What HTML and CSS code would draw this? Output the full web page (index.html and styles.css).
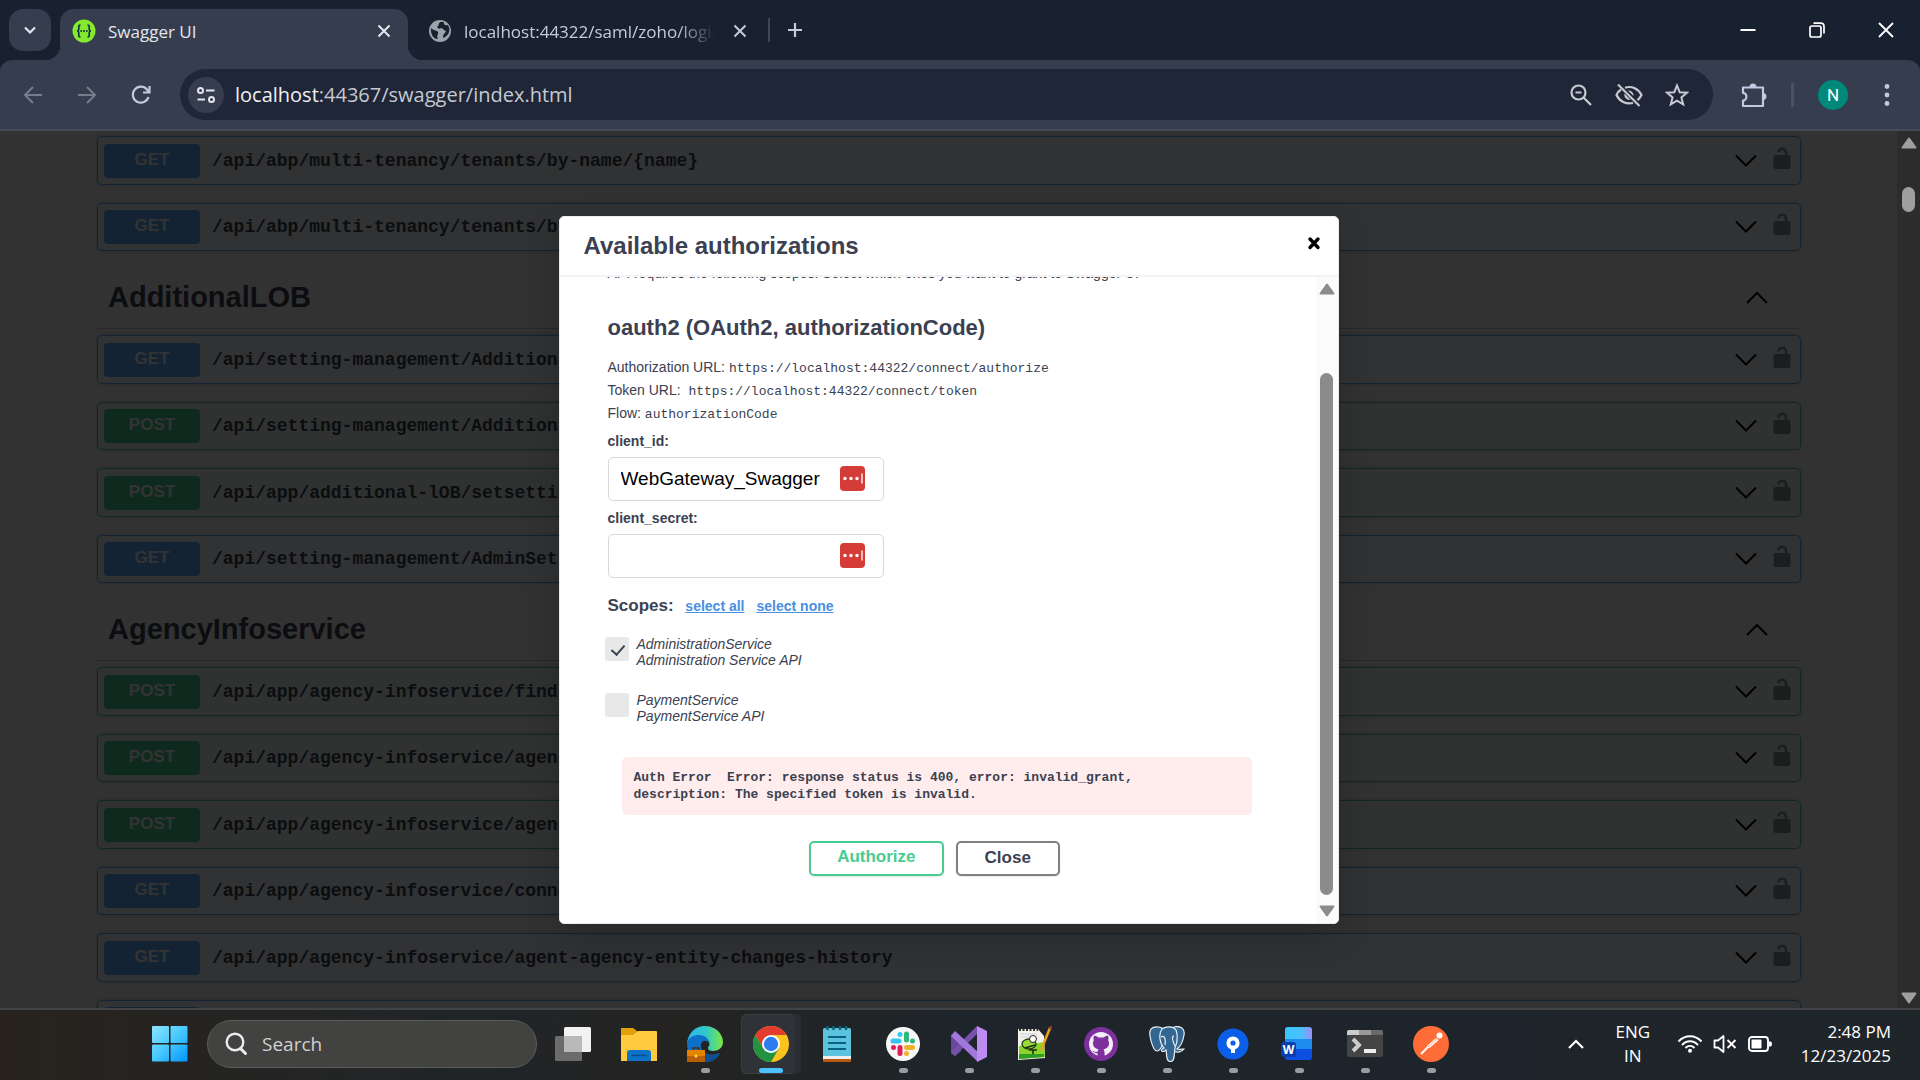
FILE: index.html
```
<!DOCTYPE html>
<html lang="en">
<head>
  <meta charset="UTF-8" />
  <meta name="viewport" content="width=device-width, initial-scale=1.0"/>
  <title>Swagger UI</title>

  <link rel="stylesheet" href="styles.css">
</head>
<body>
  <!-- shared icons -->
  <svg width="0" height="0" class="sprite">
    <symbol id="down" viewBox="0 0 22 14"><path d="M1 1.500 L11 11.500 L21 1.500" fill="none" stroke="currentColor" stroke-width="2"/></symbol>
    <symbol id="up" viewBox="0 0 22 14"><path d="M1 12 L11 2 L21 12" fill="none" stroke="currentColor" stroke-width="2"/></symbol>
    <symbol id="lock" viewBox="0 0 18 22"><rect x="0.500" y="8" width="17" height="14" rx="2"/><path d="M5.500 5.500 C5.500 0.500 13 0.500 13 5.500 V9" fill="none" stroke="#000" stroke-width="2.600"/></symbol>
    <symbol id="cross" viewBox="0 0 14 14"><path d="M1.500 1.500 L12.500 12.500 M12.500 1.500 L1.500 12.500" fill="none" stroke="currentColor" stroke-width="2"/></symbol>
    <symbol id="tri" viewBox="0 0 16 12"><path d="M8 1.500 L14.500 10.500 H1.500 Z" fill="currentColor" stroke="currentColor" stroke-width="2" stroke-linejoin="round"/></symbol>
    <symbol id="fill-key" viewBox="0 0 25 25"><rect width="25" height="25" rx="4" fill="#d63c37"/><circle cx="5" cy="12.500" r="1.700" fill="#fff"/><circle cx="11" cy="12.500" r="1.700" fill="#fff"/><circle cx="17" cy="12.500" r="1.700" fill="#fff"/><path d="M22 7.500 V17.500" stroke="#fff" stroke-width="1.300"/></symbol>
  </svg>

  <header class="tabs">
    <button class="tab-search" aria-label="Search tabs"><svg width="14" height="9" viewBox="0 0 14 9"><path d="M2 1.500 L7 6.500 L12 1.500" fill="none" stroke="#e3e6ee" stroke-width="2.200"/></svg></button>
    <div class="tab active">
      <svg width="24" height="24" viewBox="0 0 24 24"><circle cx="12" cy="12" r="11.500" fill="#85ea2d"/><path d="M8.500 6 C6 6 7 8.500 6.800 10 C6.700 11.300 6 12 5 12 C6 12 6.700 12.700 6.800 14 C7 15.500 6 18 8.500 18 M15.500 6 C18 6 17 8.500 17.200 10 C17.300 11.300 18 12 19 12 C18 12 17.300 12.700 17.200 14 C17 15.500 18 18 15.500 18" fill="none" stroke="#173647" stroke-width="1.700"/><g fill="#173647"><circle cx="9.200" cy="12" r="1"/><circle cx="12" cy="12" r="1"/><circle cx="14.800" cy="12" r="1"/></g></svg>
      <span>Swagger UI</span>
      <button aria-label="Close tab"><svg width="14" height="14"><use href="#cross"/></svg></button>
    </div>
    <div class="tab second">
      <svg width="24" height="24" viewBox="0 0 24 24"><circle cx="12" cy="12" r="11" fill="#9da3ab"/><path d="M3 9 C6 12 9 11 10 13 C11 15 8 16 10 20 C5 20 2.500 15 3 9 Z M12 3 C10 5 11 7 9 8 C10 10 12 10 13 9 C15 9 16 12 18 12 C17 15 15 14 15 19 C21 17 23 11 20 6 C17 7 15 5 16 3 Z" fill="#182130"/></svg>
      <span class="fade">localhost:44322/saml/zoho/login</span>
      <button aria-label="Close tab"><svg width="14" height="14"><use href="#cross"/></svg></button>
    </div>
    <span class="tab-line"></span>
    <button class="new-tab" aria-label="New tab"><svg width="16" height="16" viewBox="0 0 16 16"><path d="M8 1 V15 M1 8 H15" stroke="currentColor" stroke-width="2.200"/></svg></button>
    <div class="window-buttons">
      <button aria-label="Minimize"><svg width="16" height="16" viewBox="0 0 16 16"><path d="M0.500 8 H15.500" stroke="#fff" stroke-width="2"/></svg></button>
      <button aria-label="Restore"><svg width="16" height="16" viewBox="0 0 16 16" fill="none" stroke="#fff" stroke-width="1.700"><rect x="1" y="4" width="11" height="11" rx="2"/><path d="M4.500 1.200 H11.500 Q15 1.200 15 4.500 V11.500"/></svg></button>
      <button aria-label="Close"><svg width="16" height="16" viewBox="0 0 16 16"><path d="M1 1 L15 15 M15 1 L1 15" stroke="#fff" stroke-width="1.800"/></svg></button>
    </div>
  </header>

  <nav class="toolbar">
    <button class="dim" aria-label="Back"><svg width="20" height="20" viewBox="0 0 20 20"><path d="M19 10 H2 M10 2 L2 10 L10 18" fill="none" stroke="currentColor" stroke-width="2"/></svg></button>
    <button class="dim" aria-label="Forward"><svg width="20" height="20" viewBox="0 0 20 20"><path d="M1 10 H18 M10 2 L18 10 L10 18" fill="none" stroke="currentColor" stroke-width="2"/></svg></button>
    <button aria-label="Reload"><svg width="20" height="20" viewBox="0 0 20 20"><path d="M17.500 12 A8 8 0 1 1 16 4.500 L17.500 6.500" fill="none" stroke="currentColor" stroke-width="2.200"/><path d="M12 7.500 H18.500 V1" fill="none" stroke="currentColor" stroke-width="2.200"/></svg></button>
    <div class="omnibox">
      <button class="site-info" aria-label="Site information"><svg width="20" height="20" viewBox="0 0 20 20" fill="none" stroke="#e3e6ee" stroke-width="2"><circle cx="4.500" cy="5.500" r="2.500"/><path d="M10 5.500 H18.500 M1.500 14.500 H9"/><circle cx="15.500" cy="14.500" r="2.500"/></svg></button>
      <a href="#" class="url"><b>localhost</b>:44367/swagger/index.html</a>
      <button aria-label="Zoom"><svg width="24" height="24" viewBox="0 0 24 24" fill="none" stroke="currentColor" stroke-width="2.200"><circle cx="9.500" cy="9.500" r="7"/><path d="M14.500 14.500 L22 22 M6.500 9.500 H12.500"/></svg></button>
      <button aria-label="Third-party cookies blocked"><svg width="28" height="24" viewBox="0 0 28 24" fill="none" stroke="currentColor" stroke-width="2.200"><path d="M10 4.700 C17 2.500 23.500 6 26.500 12 C25.500 14 24 16 22.500 17.200 M18 20 C11 21.500 4.500 18.500 1.500 12 C2.500 9.500 4 7.800 6 6.500"/><path d="M3 1.500 L24.500 23"/><path d="M9.500 10.500 A5 5 0 0 0 15.500 16.700 Z M13 7.500 A5 5 0 0 1 18.500 13 Z" fill="currentColor" stroke="none"/></svg></button>
      <button aria-label="Bookmark"><svg width="24" height="24" viewBox="0 0 24 24"><path d="M12 2.500 L14.700 9.200 L22 9.700 L16.400 14.400 L18.200 21.400 L12 17.600 L5.800 21.400 L7.600 14.400 L2 9.700 L9.300 9.200 Z" fill="none" stroke="currentColor" stroke-width="2"/></svg></button>
    </div>
    <button class="ext" aria-label="Extensions"><svg width="26" height="26" viewBox="0 0 26 26"><path d="M2 5.500 H22 V24 H2 V18.500 C6.500 18.500 6.500 11 2 11 Z" fill="none" stroke="currentColor" stroke-width="2.200" stroke-linejoin="round"/><path d="M8.500 5 A3.300 3.300 0 0 1 15.500 5 Z M22 11 A3.300 3.300 0 0 1 22 18 Z" fill="currentColor"/></svg></button>
    <span class="tool-line"></span>
    <button class="avatar">N</button>
    <button class="menu" aria-label="Menu"><svg width="6" height="24" viewBox="0 0 6 24" fill="currentColor"><circle cx="3" cy="3.500" r="2.400"/><circle cx="3" cy="12" r="2.400"/><circle cx="3" cy="20.500" r="2.400"/></svg></button>
  </nav>

  <main>
    <div class="page">
      <section>
        <div class="opblock get"><button class="summary"><span class="method">GET</span><span class="path">/api/abp/multi-tenancy/tenants/by-name/{name}</span><svg width="22" height="14"><use href="#down"/></svg></button><button class="lock" aria-label="Unlocked"><svg width="18" height="22"><use href="#lock"/></svg></button></div>
        <div class="opblock get"><button class="summary"><span class="method">GET</span><span class="path">/api/abp/multi-tenancy/tenants/by-id/{id}</span><svg width="22" height="14"><use href="#down"/></svg></button><button class="lock" aria-label="Unlocked"><svg width="18" height="22"><use href="#lock"/></svg></button></div>
      </section>

      <h3 class="tag"><a href="#">AdditionalLOB</a><svg width="22" height="14"><use href="#up"/></svg></h3>
      <section>
        <div class="opblock get"><button class="summary"><span class="method">GET</span><span class="path">/api/setting-management/AdditionalLOB</span><svg width="22" height="14"><use href="#down"/></svg></button><button class="lock" aria-label="Unlocked"><svg width="18" height="22"><use href="#lock"/></svg></button></div>
        <div class="opblock post"><button class="summary"><span class="method">POST</span><span class="path">/api/setting-management/AdditionalLOB</span><svg width="22" height="14"><use href="#down"/></svg></button><button class="lock" aria-label="Unlocked"><svg width="18" height="22"><use href="#lock"/></svg></button></div>
        <div class="opblock post"><button class="summary"><span class="method">POST</span><span class="path">/api/app/additional-lOB/setsettings</span><svg width="22" height="14"><use href="#down"/></svg></button><button class="lock" aria-label="Unlocked"><svg width="18" height="22"><use href="#lock"/></svg></button></div>
        <div class="opblock get"><button class="summary"><span class="method">GET</span><span class="path">/api/setting-management/AdminSettings</span><svg width="22" height="14"><use href="#down"/></svg></button><button class="lock" aria-label="Unlocked"><svg width="18" height="22"><use href="#lock"/></svg></button></div>
      </section>

      <h3 class="tag"><a href="#">AgencyInfoservice</a><svg width="22" height="14"><use href="#up"/></svg></h3>
      <section>
        <div class="opblock post"><button class="summary"><span class="method">POST</span><span class="path">/api/app/agency-infoservice/find-agency</span><svg width="22" height="14"><use href="#down"/></svg></button><button class="lock" aria-label="Unlocked"><svg width="18" height="22"><use href="#lock"/></svg></button></div>
        <div class="opblock post"><button class="summary"><span class="method">POST</span><span class="path">/api/app/agency-infoservice/agency-info</span><svg width="22" height="14"><use href="#down"/></svg></button><button class="lock" aria-label="Unlocked"><svg width="18" height="22"><use href="#lock"/></svg></button></div>
        <div class="opblock post"><button class="summary"><span class="method">POST</span><span class="path">/api/app/agency-infoservice/agency-list</span><svg width="22" height="14"><use href="#down"/></svg></button><button class="lock" aria-label="Unlocked"><svg width="18" height="22"><use href="#lock"/></svg></button></div>
        <div class="opblock get"><button class="summary"><span class="method">GET</span><span class="path">/api/app/agency-infoservice/connected</span><svg width="22" height="14"><use href="#down"/></svg></button><button class="lock" aria-label="Unlocked"><svg width="18" height="22"><use href="#lock"/></svg></button></div>
        <div class="opblock get"><button class="summary"><span class="method">GET</span><span class="path">/api/app/agency-infoservice/agent-agency-entity-changes-history</span><svg width="22" height="14"><use href="#down"/></svg></button><button class="lock" aria-label="Unlocked"><svg width="18" height="22"><use href="#lock"/></svg></button></div>
        <div class="opblock get"><button class="summary"><span class="method"></span><span class="path"></span></button></div>
      </section>

      <div class="backdrop">
        <div class="modal">
          <div class="modal-header">
            <h3>Available authorizations</h3>
            <button aria-label="Close dialog"><svg width="14" height="14" viewBox="0 0 14 14"><path d="M3 3 L11 11.500 M11 3 L3 11.500" stroke="#000" stroke-width="3.400" stroke-linecap="round"/></svg></button>
          </div>
          <div class="modal-body">
            <form class="auth">
              <p class="intro">API requires the following scopes. Select which ones you want to grant to Swagger UI</p>
              <h4>oauth2 (OAuth2, authorizationCode)</h4>
              <p>Authorization URL: <code>https://localhost:44322/connect/authorize</code></p>
              <p>Token URL:&nbsp; <code>https://localhost:44322/connect/token</code></p>
              <p>Flow: <code>authorizationCode</code></p>
              <label class="field-label" for="client_id">client_id:</label>
              <div class="field">
                <input type="text" id="client_id" value="WebGateway_Swagger">
                <svg width="25" height="25"><use href="#fill-key"/></svg>
              </div>
              <label class="field-label" for="client_secret">client_secret:</label>
              <div class="field">
                <input type="password" id="client_secret">
                <svg width="25" height="25"><use href="#fill-key"/></svg>
              </div>
              <h2>Scopes: <a href="#">select all</a><a href="#">select none</a></h2>
              <div class="scope">
                <input type="checkbox" id="scope-admin" checked>
                <label for="scope-admin">AdministrationService<br>Administration Service API</label>
              </div>
              <div class="scope">
                <input type="checkbox" id="scope-payment">
                <label for="scope-payment">PaymentService<br>PaymentService API</label>
              </div>
              <div class="errors">Auth Error&nbsp; Error: response status is 400, error: invalid_grant, description: The specified token is invalid.</div>
              <div class="buttons">
                <button type="button" class="authorize">Authorize</button>
                <button type="button">Close</button>
              </div>
            </form>
            <div class="scrollbar">
              <svg width="16" height="12"><use href="#tri"/></svg>
              <span class="thumb"></span>
              <svg class="flip" width="16" height="12"><use href="#tri"/></svg>
            </div>
          </div>
        </div>
      </div>
    </div>
    <div class="scrollbar page-scroll">
      <svg width="16" height="12"><use href="#tri"/></svg>
      <span class="thumb"></span>
      <svg class="flip" width="16" height="12"><use href="#tri"/></svg>
    </div>
  </main>

  <footer class="taskbar">
    <button class="start" aria-label="Start"><svg width="36" height="36" viewBox="0 0 36 36"><defs><linearGradient id="win" x1="0" y1="0" x2="36" y2="36" gradientUnits="userSpaceOnUse"><stop offset="0" stop-color="#8fe3ff"/><stop offset="0.500" stop-color="#45c8ff"/><stop offset="1" stop-color="#0093ff"/></linearGradient></defs><g fill="url(#win)"><rect width="17" height="17" rx="1"/><rect x="18.500" width="17" height="17" rx="1"/><rect y="18.500" width="17" height="17" rx="1"/><rect x="18.500" y="18.500" width="17" height="17" rx="1"/></g></svg></button>
    <label class="search">
      <svg width="24" height="24" viewBox="0 0 24 24" fill="none" stroke="#e8edf0"><circle cx="11" cy="10" r="8.300" stroke-width="2.400"/><path d="M16.500 16.500 L21.500 21.500" stroke-width="3" stroke-linecap="round"/></svg>
      <input type="text" placeholder="Search" aria-label="Search">
    </label>
    <div class="apps">
      <button aria-label="Task view"><svg width="36" height="36" viewBox="0 0 36 36"><rect x="0" y="10" width="27" height="25" rx="1.500" fill="#6b6b6b"/><rect x="9" y="1" width="27" height="25" rx="1.500" fill="#f2f2f2"/><rect x="9" y="10" width="18" height="16" fill="#b9b9b9"/></svg></button>
      <button aria-label="File Explorer"><svg width="36" height="36" viewBox="0 0 36 36"><path d="M0 2 H12 L16 5 V12 H0 Z" fill="#e3a008"/><path d="M0 9 H12 L17 5 H35 Q36 5 36 6 V35 H0 Z" fill="#ffca3d"/><path d="M6 35 V27 Q6 24 9 24 H27 Q30 24 30 27 V35 Z" fill="#0b72c8"/><path d="M11 29.500 H25" stroke="#084d8a" stroke-width="1.600" stroke-linecap="round"/></svg></button>
      <button class="open" aria-label="Edge"><svg width="36" height="36" viewBox="0 0 36 36"><defs><linearGradient id="edge"><stop offset="0" stop-color="#2fb4f0"/><stop offset="0.550" stop-color="#32c9c3"/><stop offset="1" stop-color="#7ee83f"/></linearGradient></defs><path d="M0 18 C1 7 8 0 18 0 C29 0 36 8 36 16 C36 22 31 25 26 25 C21 25 20 22 22 20 C24 16 20 10 12 11 C6 11 2 14 0 18 Z" fill="url(#edge)"/><path d="M0 18 C1 11 7 9 12 9 C18 9 22 13 22 17 C18 12 13 16 14 21 C15 28 24 31 33 27 C30 33 25 36 18 36 C8 36 0 29 0 18 Z" fill="#0f6fc9"/><path d="M14 21 C15 28 24 31 33 27 C30 33 25 36 18 36 Z" fill="#104f96"/><rect y="24" width="18" height="12" fill="#e28400"/><rect y="30" width="18" height="6" fill="#b65f06"/><path d="M6 24 V22 H12 V24" fill="none" stroke="#4b3010" stroke-width="1.500"/><circle cx="9" cy="30" r="1.500" fill="#ffe14a"/></svg></button>
      <button class="open current" aria-label="Chrome"><svg width="36" height="36" viewBox="0 0 36 36"><circle cx="18" cy="18" r="18" fill="#fcc31e"/><path d="M2.400 9 A18 18 0 0 1 33.600 9 H18 L10.200 22.500 Z" fill="#e33b2e"/><path d="M2.400 9 A18 18 0 0 0 18 36 L25.800 22.500 H10.200 Z" fill="#229342"/><circle cx="18" cy="18" r="9" fill="#fff"/><circle cx="18" cy="18" r="7.200" fill="#2f7bf0"/></svg></button>
      <button aria-label="Notepad"><svg width="36" height="36" viewBox="0 0 36 36"><rect x="4" y="2" width="28" height="32" rx="1.500" fill="#5cc3de"/><rect x="4" y="30" width="28" height="4" fill="#eee"/><rect x="4" y="33" width="28" height="3" rx="1" fill="#b95a12"/><path d="M9 11 H27 M9 17 H27 M9 23 H27" stroke="#0b6280" stroke-width="2"/><path d="M8.500 0 V4 M14.500 0 V4 M21 0 V4 M27 0 V4" stroke="#0b6280" stroke-width="2.500"/></svg></button>
      <button class="open" aria-label="Slack"><svg width="36" height="36" viewBox="0 0 36 36"><circle cx="18" cy="18" r="17" fill="#f7f7f7"/><g stroke-width="5" stroke-linecap="round"><path d="M8 15 H14 M15 8.500 V8.600" stroke="#36c5f0"/><path d="M21.500 8 V14 M27.500 15 V14.900" stroke="#2eb67d"/><path d="M21.500 21.500 H27.500 M21.500 27.500 V27.600" stroke="#ecb22e"/><path d="M15 21.500 V27.500 M8.500 21.500 V21.600" stroke="#e01e5a"/></g></svg></button>
      <button class="open" aria-label="Visual Studio"><svg width="36" height="36" viewBox="0 0 36 36"><path d="M0 9 L4 6 L10 11 V25 L4 30 L0 27 Z" fill="#68459f"/><path d="M4 30 L26 8 V0 L0 26 V27 Z" fill="#7651ab"/><path d="M0 10 L4 5 L27 26 V36 Z" fill="#a077db"/><path d="M26 0 L36 5 V31 L26 36 Z" fill="#bd8bf2"/></svg></button>
      <button class="open" aria-label="Notepad++"><svg width="36" height="36" viewBox="0 0 36 36"><path d="M1 3 H21 L27 10 L28 32 L1 34 Z" fill="#f3f3ec"/><path d="M2 20 L27 16 L28 31 L2 33 Z" fill="#8bd42b"/><path d="M2 28 H27 V31 L2 33 Z" fill="#2f9d25"/><path d="M3 8 H20 M3 11 H14" stroke="#c9d0d6"/><path d="M2 4 H21" stroke="#333" stroke-width="2" stroke-dasharray="2 1.500"/><ellipse cx="12" cy="18" rx="7" ry="5" fill="#9ada3b" stroke="#263f12" stroke-width="1.300"/><circle cx="16" cy="13" r="3.500" fill="#fff" stroke="#222"/><path d="M8 22 L18 19 M12 24 H20 M16 24 V28" stroke="#1d3010" stroke-width="1.600"/><path d="M33 2 L24 24" stroke="#e8a020" stroke-width="2.600"/><path d="M34 0 L33 3" stroke="#a33" stroke-width="2.600"/></svg></button>
      <button class="open" aria-label="GitHub"><svg width="36" height="36" viewBox="0 0 36 36"><circle cx="18" cy="18" r="17" fill="#7d2f9e"/><circle cx="18" cy="18" r="12" fill="#f4edf7"/><path d="M11 9.500 Q14 10 15.500 11.500 H20.500 Q22 10 25 9.500 Q26 12 25.200 14 Q27 17 25.500 20 Q24 23 20.500 23.500 Q22 25 21.500 31 H14.500 V27 Q11 28 9 24 Q12 27 14.600 25.500 L15.500 23.500 Q12 23 10.500 20 Q9 17 10.800 14 Q10 12 11 9.500 Z" fill="#7d2f9e"/></svg></button>
      <button class="open" aria-label="pgAdmin"><svg width="36" height="36" viewBox="0 0 36 36" fill="#336791" stroke="#e8eef3" stroke-width="1.200"><path d="M10 1 C2 0 0 4 1 10 C2 17 5 25 8 25 C10 25 12 22 13 20 L13 2 Z"/><path d="M25 1 C33 -1 36 4 35 9 C34 15 31 21 28 23 C30 24 33 23 35 23 C33 26 28 27 24 25 L22 3 Z"/><path d="M13 3 C17 0 24 0 27 4 C29 10 28 17 26 22 C25 28 26 35 22 35.500 C17 36 18 30 17 24 C12 28 11 23 15 22 C11 18 9 8 13 3 Z"/><path d="M12 11 C15 9 17 12 16 19 M25 10 C22 10 24 16 26 20" fill="none"/></svg></button>
      <button class="open" aria-label="Sourcetree"><svg width="36" height="36" viewBox="0 0 36 36"><circle cx="18" cy="18" r="15.500" fill="#0a5ee8"/><circle cx="18" cy="17" r="4.600" fill="none" stroke="#fff" stroke-width="4"/><path d="M18 21 V27" stroke="#fff" stroke-width="4"/></svg></button>
      <button class="open" aria-label="Word"><svg width="36" height="36" viewBox="0 0 36 36"><defs><linearGradient id="word"><stop offset="0" stop-color="#36c8fb"/><stop offset="0.600" stop-color="#4cc0ff"/><stop offset="1" stop-color="#9f8cf5"/></linearGradient></defs><rect x="4" y="1" width="27" height="33" rx="3" fill="#0d4fe0"/><path d="M7 1 H28 Q31 1 31 4 V13 H4 V4 Q4 1 7 1 Z" fill="url(#word)"/><path d="M4 13 H31 V23 H4 Z" fill="#1d8bef"/><rect x="0" y="16" width="15" height="15" rx="3" fill="#0c3fae"/><text x="7.500" y="28" text-anchor="middle" class="word-text">W</text></svg></button>
      <button class="open" aria-label="Terminal"><svg width="36" height="36" viewBox="0 0 36 36"><rect y="4" width="36" height="27" rx="2" fill="#444"/><path d="M0 9 V6 Q0 4 2 4 H12 V9 Z" fill="#ccc"/><path d="M12 4 H24 V9 H12 Z" fill="#999"/><path d="M24 4 H34 Q36 4 36 6 V9 H24 Z" fill="#6a6a6a"/><path d="M6 13 L12 19 L6 25" fill="none" stroke="#ccc" stroke-width="4"/><rect x="17" y="23" width="12" height="4" fill="#eee"/></svg></button>
      <button class="open" aria-label="Postman"><svg width="36" height="36" viewBox="0 0 36 36"><circle cx="18" cy="18" r="18" fill="#ff6c37"/><circle cx="26.500" cy="9.500" r="3" fill="#fff"/><path d="M23 12 L14 20 L17 22 L26 14 Z" fill="#fff"/><path d="M16 20 L8 28" stroke="#fff" stroke-width="2"/><path d="M15 21 L25 12 M17 22 L26 14" stroke="#ff6c37" stroke-width="0.600"/></svg></button>
    </div>
    <div class="tray">
      <button aria-label="Show hidden icons"><svg width="18" height="12" viewBox="0 0 18 12"><path d="M2 10 L9 3 L16 10" fill="none" stroke="#fff" stroke-width="2.200"/></svg></button>
      <button class="lang">ENG<br>IN</button>
      <button class="status" aria-label="Network, volume, battery">
        <svg width="26" height="20" viewBox="0 0 26 20" fill="none" stroke="#fff" stroke-width="1.900"><path d="M1.500 7.500 C8 0.500 18 0.500 24.500 7.500 M5 11 C9.500 6 16.500 6 21 11 M8.500 14 C11 11.200 15 11.200 17.500 14"/><circle cx="13" cy="16.800" r="2" fill="#fff" stroke="none"/></svg>
        <svg width="24" height="20" viewBox="0 0 24 20" fill="none" stroke="#fff" stroke-width="1.800"><path d="M1.500 6.500 H5 L10.500 2 V18 L5 13.500 H1.500 Z" stroke-linejoin="round"/><path d="M14.500 6 L22.500 14 M22.500 6 L14.500 14"/></svg>
        <svg width="26" height="20" viewBox="0 0 26 20"><rect x="2" y="3" width="19" height="14" rx="3" fill="none" stroke="#fff" stroke-width="1.900"/><rect x="4.500" y="5.500" width="10" height="9" rx="1" fill="#fff"/><path d="M22 7.500 H23.500 Q25 7.500 25 10 Q25 12.500 23.500 12.500 H22 Z" fill="#fff"/></svg>
      </button>
      <button class="clock">2:48 PM<br>12/23/2025</button>
    </div>
  </footer>
</body>
</html>
```
FILE: styles.css
```
* {
  box-sizing: border-box;
}

body {
  font-family: "Liberation Sans", Arial, sans-serif;
  margin: 0;
  height: 100vh;
  display: flex;
  flex-direction: column;
  overflow: hidden;
  background: #182130;
  color: #3b4151;
}

button {
  padding: 0;
  border: 0;
  background: none;
  color: inherit;
  font-family: inherit;
}

svg {
  display: block;
  flex: none;
}

.sprite {
  position: absolute;
}

h2, h3, h4, p {
  margin: 0;
}

/* browser tabs */
.tabs {
  display: flex;
  align-items: center;
  height: 60px;
  flex: none;
  padding-left: 9px;
  font-family: "Open Sans", "Noto Sans", sans-serif;
  font-size: 17px;
  color: #c3cbdd;
}

.tab-search {
  display: grid;
  place-items: center;
  width: 42px;
  height: 42px;
  border-radius: 14px;
  background: #353d4e;
}

.tab {
  display: flex;
  align-items: center;
  gap: 12px;
  width: 348px;
  height: 51px;
  padding: 0 11px 7px 20px;
  align-self: flex-end;
}

.tab span {
  flex: 1;
  overflow: hidden;
  white-space: nowrap;
}

.tab button {
  width: 26px;
  display: grid;
  place-items: center;
}

.tab.active {
  position: relative;
  margin-left: 9px;
  padding-left: 12px;
  border-radius: 14px 14px 0 0;
  background: #353d4e;
  color: #e3e6ee;
}

.tab.second {
  width: 356px;
}

/* flared feet of the active tab */
.tab.active::before,
.tab.active::after {
  content: "";
  position: absolute;
  bottom: 0;
  width: 14px;
  height: 14px;
}

.tab.active::before {
  right: 100%;
  background: radial-gradient(circle at 0 0, transparent 14px, #353d4e 14px);
}

.tab.active::after {
  left: 100%;
  background: radial-gradient(circle at 100% 0, transparent 14px, #353d4e 14px);
}

.tab .fade {
  -webkit-mask-image: linear-gradient(to right, #000 85%, transparent);
  mask-image: linear-gradient(to right, #000 85%, transparent);
}

.tab-line {
  width: 2px;
  height: 24px;
  margin-left: 4px;
  background: #3d4657;
}

.new-tab {
  margin-left: 17px;
}

.window-buttons {
  display: flex;
  margin-left: auto;
}

.window-buttons button {
  width: 69px;
  height: 60px;
  display: grid;
  place-items: center;
}

/* toolbar */
.toolbar {
  display: flex;
  align-items: center;
  height: 71px;
  flex: none;
  padding: 0 30px 0 23px;
  border-bottom: 2px solid #434a5b;
  border-radius: 12px 12px 0 0;
  background: #353d4e;
  color: #c1cae0;
  font-family: "Open Sans", "Noto Sans", sans-serif;
}

.toolbar > button {
  margin-right: 34px;
}

.toolbar .dim {
  color: #767d8c;
}

.omnibox {
  display: flex;
  align-items: center;
  flex: 1;
  gap: 22px;
  height: 51px;
  margin-left: -5px;
  padding: 0 24px 0 8px;
  border-radius: 26px;
  background: #1e2637;
  color: #c7c9d1;
}

.site-info {
  display: grid;
  place-items: center;
  width: 36px;
  height: 36px;
  border-radius: 50%;
  background: #353d4e;
}

.url {
  flex: 1;
  margin-left: -11px;
  font-size: 20px;
  color: #c7c9d1;
  text-decoration: none;
}

.url b {
  font-weight: 400;
  color: #f0f1f5;
}

.toolbar .ext {
  margin: 0 24px 0 28px;
}

.tool-line {
  width: 3px;
  height: 24px;
  margin-right: 24px;
  background: #4a5264;
}

.toolbar .avatar {
  width: 30px;
  height: 30px;
  border-radius: 50%;
  background: #00897b;
  color: #fff;
  font-family: Roboto, sans-serif;
  font-size: 17px;
  margin-right: 36px;
}

.toolbar .menu {
  margin-right: 0;
}

/* swagger page */
main {
  display: flex;
  flex: 1;
  min-height: 0;
}

.page {
  position: relative;
  flex: 1;
  overflow: hidden;
  padding: 5px 96px 0 97px;
  background: #fafafa;
}

.opblock {
  display: flex;
  align-items: center;
  height: 48px;
  margin-bottom: 18px;
  padding: 0 9px 0 6px;
  border: 1px solid #61affe;
  border-radius: 5px;
  background: #eff7ff;
  box-shadow: 0 0 4px rgba(0,0,0,0.2);
}

.opblock:nth-child(odd) {
  height: 49px;
}

.opblock.post {
  border-color: #49cc90;
  background: #edfaf4;
}

.summary {
  display: flex;
  align-items: center;
  flex: 1;
  text-align: left;
}

.summary svg {
  color: #000;
}

.method {
  width: 96px;
  height: 34px;
  padding: 7px 0 9px;
  border-radius: 4px;
  background: #61affe;
  color: #fff;
  font-size: 17px;
  font-weight: bold;
  line-height: 18px;
  text-align: center;
}

.post .method {
  background: #49cc90;
}

.path {
  flex: 1;
  padding-left: 12px;
  color: #3b4151;
  font-family: "Liberation Mono", monospace;
  font-size: 18px;
  font-weight: bold;
}

.lock {
  margin: 0 0 6px 16px;
  opacity: 0.4;
}

.tag {
  display: flex;
  justify-content: space-between;
  align-items: center;
  height: 60px;
  margin-bottom: 6px;
  padding: 0 33px 2px 11px;
  border-bottom: 1px solid rgba(59,65,81,0.3);
  font-size: 29px;
  color: #000;
}

.tag a {
  color: #3b4151;
  text-decoration: none;
}

/* scrollbars */
.scrollbar {
  display: flex;
  flex-direction: column;
  align-items: center;
  width: 22px;
  padding: 6px 0;
  background: #fbfbfb;
  color: #8b8b8b;
}

.scrollbar .thumb {
  flex: 1;
  width: 13px;
  margin: 78px 0 10px;
  border-radius: 7px;
  background: #8b8b8b;
}

.scrollbar .flip {
  transform: rotate(180deg);
}

.page-scroll {
  width: 23px;
  padding-bottom: 4px;
  background: #2c2c2c;
  color: #9f9f9f;
}

.page-scroll .thumb {
  flex: none;
  height: 25px;
  margin: 38px 0 auto;
  background: #9f9f9f;
}

/* authorization dialog */
.backdrop {
  position: absolute;
  inset: 0;
  display: grid;
  place-items: center;
  background: rgba(0,0,0,0.8);
}

.modal {
  width: 780px;
  overflow: hidden;
  border: 1px solid #ebebeb;
  border-radius: 5px;
  background: #fff;
  box-shadow: 0 12px 36px rgba(0,0,0,0.2);
}

.modal-header {
  display: flex;
  justify-content: space-between;
  align-items: center;
  height: 60px;
  padding: 0 17px 0 24px;
  border-bottom: 2px solid #f3f3f3;
}

.modal-header h3 {
  font-size: 24px;
}

.modal-header button {
  margin-bottom: 6px;
}

.modal-body {
  display: flex;
  overflow: hidden;
}

.auth {
  flex: 1;
  padding: 0 48px 47px;
  font-size: 14px;
}

.auth p {
  line-height: 23px;
}

/* scrolled partly under the header */
.auth .intro {
  margin-top: -15px;
}

.auth h4 {
  margin: 30px 0 15px;
  font-size: 22px;
  line-height: 26px;
}

code, .errors {
  font-family: "Liberation Mono", monospace;
  font-size: 13px;
}

code {
  line-height: 1;
}

.field-label {
  display: block;
  margin: 6px 0;
  font-weight: bold;
  line-height: 20px;
}

.field {
  position: relative;
  width: 276px;
  margin-bottom: 7px;
}

.field input {
  display: block;
  width: 100%;
  height: 44px;
  padding: 0 44px 0 12px;
  border: 1px solid #d9d9d9;
  border-radius: 5px;
  background: #fff;
  color: #000;
  font-family: inherit;
  font-size: 19px;
}

.field svg {
  position: absolute;
  top: 9px;
  right: 19px;
}

.auth h2 {
  margin: 16px 0 18px;
  font-size: 17px;
  line-height: 24px;
}

.auth h2 a {
  margin-left: 7px;
  margin-right: 5px;
  font-size: 14px;
  color: #4990e2;
}

.scope {
  display: flex;
  gap: 8px;
  margin: 0 0 24px -3px;
  font-style: italic;
  line-height: 16px;
}

.scope input {
  appearance: none;
  width: 24px;
  height: 24px;
  margin: 1px 0 0;
  border-radius: 3px;
  background: #e8e8e8;
}

/* tick mark */
.scope input:checked::after {
  content: "";
  display: block;
  width: 6px;
  height: 11px;
  margin: 5px 0 0 9px;
  border: solid #3b4151;
  border-width: 0 2px 2px 0;
  transform: rotate(42deg);
}

.errors {
  margin: 33px 16px 26px 14px;
  padding: 12px 24px 12px 12px;
  border-radius: 5px;
  background: #ffeded;
  font-weight: bold;
  line-height: 17px;
}

.buttons {
  display: flex;
  justify-content: center;
  gap: 12px;
  padding-right: 6px;
}

.buttons button {
  height: 35px;
  padding: 0 27px;
  border: 2px solid #808080;
  border-radius: 5px;
  box-shadow: 0 1px 2px rgba(0,0,0,0.1);
  font-size: 17px;
  font-weight: bold;
}

.buttons .authorize {
  padding: 0 26px 2px;
  border-color: #49cc90;
  color: #49cc90;
}

/* windows taskbar */
.taskbar {
  display: flex;
  align-items: center;
  height: 72px;
  flex: none;
  padding: 0 29px 2px 152px;
  border-top: 2px solid #414345;
  background: linear-gradient(to right, #28231e, #212528 25%, #242322 35%, #1e252a 50%, #1e242b 75%, #1f262a);
  color: #fff;
  font-family: "Open Sans", "Noto Sans", sans-serif;
  font-size: 17px;
}

.search {
  display: flex;
  align-items: center;
  gap: 14px;
  width: 330px;
  height: 48px;
  margin-left: 19px;
  padding: 0 16px;
  border: 1px solid #5a5b5a;
  border-radius: 24px;
  background: #424241;
}

.search input {
  width: 100%;
  padding: 0;
  border: 0;
  background: none;
  color: #fff;
  font-family: inherit;
  font-size: 19px;
}

.search input::placeholder {
  color: #d0d0d0;
}

.apps {
  display: flex;
  gap: 6px;
  margin-left: 6px;
}

.apps button {
  position: relative;
  display: grid;
  place-items: center;
  width: 60px;
  height: 60px;
  border-radius: 6px;
}

.apps .current {
  background: #2f3337;
  box-shadow: inset -6px 0 0 #292d31, inset 0 0 0 1px #3b3f43;
}

.apps .open::after {
  content: "";
  position: absolute;
  bottom: 1px;
  left: 26px;
  width: 9px;
  height: 5px;
  border-radius: 3px;
  background: #9a9da0;
}

.apps .current::after {
  left: 18px;
  width: 24px;
  background: #4cc2ff;
}

.word-text {
  fill: #fff;
  font-size: 12px;
  font-weight: bold;
}

.tray {
  display: flex;
  align-items: center;
  margin-left: auto;
}

.tray button {
  font-size: 17px;
  line-height: 24px;
}

.lang {
  width: 48px;
  margin: 0 20px 0 24px;
}

.status {
  display: flex;
  gap: 10px;
}

.clock {
  margin-left: 28px;
  text-align: right;
}
```
